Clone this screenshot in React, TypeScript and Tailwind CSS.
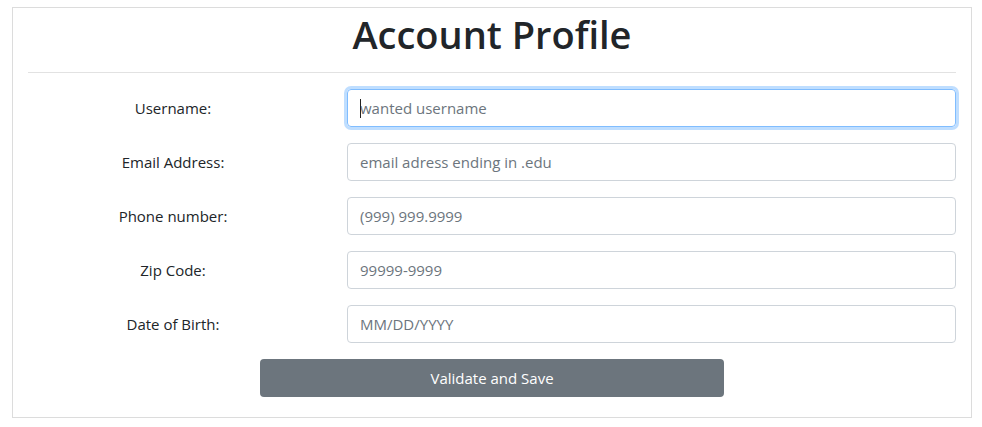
const fields = [
  { label: "Username:", placeholder: "wanted username", focused: true },
  { label: "Email Address:", placeholder: "email adress ending in .edu" },
  { label: "Phone number:", placeholder: "(999) 999.9999" },
  { label: "Zip Code:", placeholder: "99999-9999" },
  { label: "Date of Birth:", placeholder: "MM/DD/YYYY" },
];

export default function App() {
  return (
    <div className="bg-white w-[982px] h-[427px] pt-[7px] pl-[12px] font-['Open_Sans',sans-serif] text-[#212529]">
      <div className="w-[960px] h-[411px] border border-[#dcdcdc] px-[15px]">
        <h1 className="text-center text-[38px] font-semibold leading-[48px] pt-[2px] pb-[14px]">Account Profile</h1>
        <hr className="border-t border-[#e2e2e2] mb-[16px]" />
        <form className="flex flex-col gap-[16px]" onSubmit={(e) => e.preventDefault()}>
          {fields.map((f) => (
            <div key={f.label} className="flex items-center">
              <label className="w-[290px] text-center text-[15px]">{f.label}</label>
              <div className="relative ml-[29px] flex-1">
                <input
                  type="text"
                  placeholder={f.placeholder}
                  className={`w-full h-[38px] rounded-[4px] border px-[12px] text-[15px] outline-none placeholder:text-[#6c757d] ${
                    f.focused
                      ? "border-[#80bdff] shadow-[0_0_0_3px_rgba(0,123,255,0.25)]"
                      : "border-[#ced4da]"
                  }`}
                />
                {f.focused && <span className="absolute left-[13px] top-[10px] w-px h-[19px] bg-[#222]" />}
              </div>
            </div>
          ))}
          <div className="flex justify-center">
            <button
              type="submit"
              className="w-[464px] h-[38px] rounded-[4px] bg-[#6c757d] text-white text-[15px]"
            >
              Validate and Save
            </button>
          </div>
        </form>
      </div>
    </div>
  );
}
